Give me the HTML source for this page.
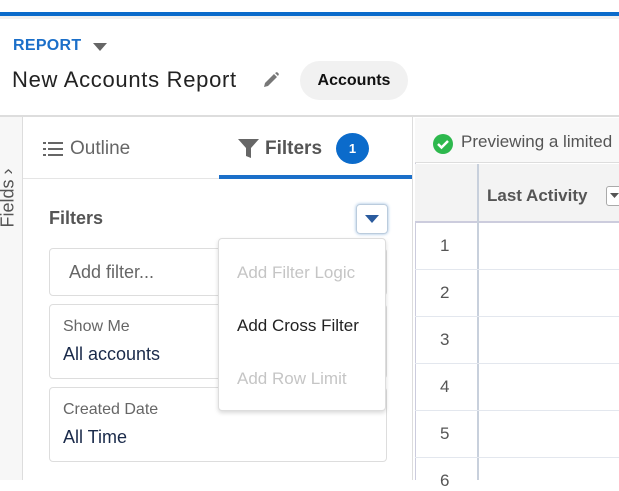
<!DOCTYPE html>
<html><head><style>
*{margin:0;padding:0;box-sizing:border-box}
body{width:619px;height:480px;overflow:hidden;background:#fff;font-family:"Liberation Sans",sans-serif;position:relative;color:#3e3e3c}
.a{position:absolute}
</style></head><body>
<div class="a" style="left:0;top:12px;width:619px;height:4px;background:#0b6bcb"></div>
<div class="a" style="left:0;top:16px;width:619px;height:3px;background:#f0f0f0"></div>
<div class="a" style="left:13px;top:37px;font-size:16px;color:#1b6fc9;font-weight:bold;letter-spacing:0.3px">REPORT</div>
<svg class="a" style="left:92px;top:42px" width="16" height="10"><path d="M1 1h14L8 9z" fill="#666"/></svg>
<div class="a" style="left:12px;top:67px;font-size:22px;color:#222;letter-spacing:0.7px">New Accounts Report</div>
<svg class="a" style="left:262px;top:71px" width="18" height="18"><path d="M2 16l1-4 9-9 3 3-9 9z M13 2l2-1 2 2-1 2z" fill="#777"/></svg>
<div class="a" style="left:300px;top:61px;width:108px;height:39px;border-radius:20px;background:#f1f1f1;font-size:16px;font-weight:bold;color:#111;text-align:center;line-height:39px">Accounts</div>
<div class="a" style="left:0;top:115px;width:619px;height:2px;background:#ddd"></div>
<!-- left strip -->
<div class="a" style="left:0;top:117px;width:23px;height:363px;background:#f7f7f7;border-right:1px solid #ddd;overflow:hidden">
<div class="a" style="left:-32px;top:60px;transform:rotate(-90deg);font-size:18px;color:#555;width:80px;white-space:nowrap">Fields ›</div>
</div>
<!-- panel -->
<div class="a" style="left:23px;top:178px;width:390px;height:1px;background:#e5e5e5"></div>
<div class="a" style="left:219px;top:175px;width:193px;height:4px;background:#1b6fc9"></div>
<svg class="a" style="left:43px;top:142px" width="20" height="14"><g fill="#666"><rect x="0" y="0" width="3" height="2"/><rect x="5" y="0" width="15" height="2"/><rect x="0" y="6" width="3" height="2"/><rect x="5" y="6" width="15" height="2"/><rect x="0" y="12" width="3" height="2"/><rect x="5" y="12" width="15" height="2"/></g></svg>
<div class="a" style="left:70px;top:138px;font-size:19px;color:#666">Outline</div>
<svg class="a" style="left:238px;top:139px" width="22" height="20"><path d="M0 0h21l-8 9v10l-5-2V9z" fill="#666"/></svg>
<div class="a" style="left:265px;top:138px;font-size:19px;font-weight:bold;color:#555">Filters</div>
<div class="a" style="left:336px;top:133px;width:33px;height:31px;border-radius:50%;background:#0b6bcb;color:#fff;font-size:13px;font-weight:bold;text-align:center;line-height:31px">1</div>
<div class="a" style="left:412px;top:117px;width:1px;height:363px;background:#ddd"></div>
<div class="a" style="left:49px;top:208px;font-size:18px;font-weight:bold;color:#555">Filters</div>
<div class="a" style="left:356px;top:204px;width:32px;height:30px;border:1px solid #bcd;border-radius:4px;box-shadow:0 0 3px #9bd"></div>
<svg class="a" style="left:365px;top:215px" width="14" height="9"><path d="M0 0h14L7 8z" fill="#2a5b9e"/></svg>
<div class="a" style="left:49px;top:248px;width:338px;height:48px;border:1px solid #ddd;border-radius:4px"></div>
<div class="a" style="left:69px;top:262px;font-size:18px;color:#666">Add filter...</div>
<div class="a" style="left:49px;top:304px;width:338px;height:75px;border:1px solid #ddd;border-radius:4px"></div>
<div class="a" style="left:63px;top:318px;font-size:16px;color:#666">Show Me</div>
<div class="a" style="left:63px;top:344px;font-size:18px;color:#1a2a4a">All accounts</div>
<div class="a" style="left:49px;top:387px;width:338px;height:75px;border:1px solid #ddd;border-radius:4px"></div>
<div class="a" style="left:63px;top:401px;font-size:16px;color:#666">Created Date</div>
<div class="a" style="left:63px;top:427px;font-size:18px;color:#1a2a4a">All Time</div>
<!-- dropdown -->
<div class="a" style="left:218px;top:238px;width:168px;height:173px;background:#fff;border:1px solid #ddd;border-radius:4px;box-shadow:0 2px 4px rgba(0,0,0,.15)"></div>
<div class="a" style="left:237px;top:263px;font-size:17px;color:#c5c5c5">Add Filter Logic</div>
<div class="a" style="left:237px;top:316px;font-size:17px;color:#222">Add Cross Filter</div>
<div class="a" style="left:237px;top:369px;font-size:17px;color:#c5c5c5">Add Row Limit</div>
<!-- right grid -->
<div class="a" style="left:415px;top:118px;width:204px;height:362px;background:#fff;border-left:1px solid #ccd"></div>
<div class="a" style="left:415px;top:118px;width:204px;height:45px;background:#f8f8f8;border-bottom:1px solid #ddd"></div>
<svg class="a" style="left:433px;top:134px" width="20" height="20"><circle cx="10" cy="10" r="10" fill="#2db84d"/><path d="M5 10l3.5 3.5L15 7" stroke="#fff" stroke-width="2.5" fill="none"/></svg>
<div class="a" style="left:461px;top:132px;font-size:17px;color:#555;white-space:nowrap">Previewing a limited</div>
<div class="a" style="left:415px;top:164px;width:204px;height:59px;background:#f3f3f3;border-bottom:2px solid #ccd"></div>
<div class="a" style="left:477px;top:164px;width:2px;height:316px;background:#c8d0dc"></div>
<div class="a" style="left:487px;top:186px;font-size:17px;font-weight:bold;color:#555;white-space:nowrap">Last Activity</div>
<div class="a" style="left:606px;top:186px;width:16px;height:20px;border:1px solid #aaa;border-radius:3px;background:#fff"></div>
<svg class="a" style="left:610px;top:193px" width="9" height="6"><path d="M0 0h9L4.5 5z" fill="#555"/></svg>
<div class="a" style="left:415px;top:269px;width:204px;height:1px;background:#e3e7ee"></div>
<div class="a" style="left:415px;top:316px;width:204px;height:1px;background:#e3e7ee"></div>
<div class="a" style="left:415px;top:363px;width:204px;height:1px;background:#e3e7ee"></div>
<div class="a" style="left:415px;top:410px;width:204px;height:1px;background:#e3e7ee"></div>
<div class="a" style="left:415px;top:457px;width:204px;height:1px;background:#e3e7ee"></div>
<div class="a" style="left:440px;top:236px;font-size:17px;color:#555">1</div>
<div class="a" style="left:440px;top:283px;font-size:17px;color:#555">2</div>
<div class="a" style="left:440px;top:330px;font-size:17px;color:#555">3</div>
<div class="a" style="left:440px;top:377px;font-size:17px;color:#555">4</div>
<div class="a" style="left:440px;top:424px;font-size:17px;color:#555">5</div>
<div class="a" style="left:440px;top:471px;font-size:17px;color:#555">6</div>
</body></html>
